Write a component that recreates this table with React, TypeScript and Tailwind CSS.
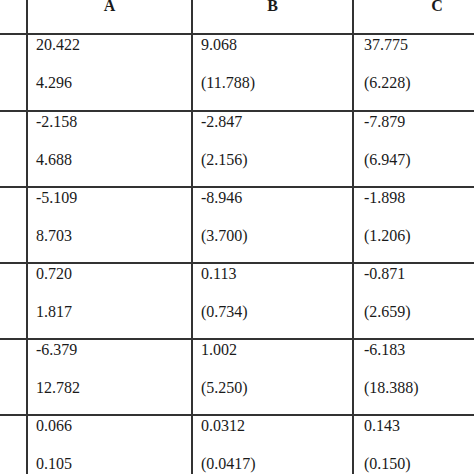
import React from 'react';

const rows = [
  { a: ['20.422', '4.296'], b: ['9.068', '(11.788)'], c: ['37.775', '(6.228)'] },
  { a: ['-2.158', '4.688'], b: ['-2.847', '(2.156)'], c: ['-7.879', '(6.947)'] },
  { a: ['-5.109', '8.703'], b: ['-8.946', '(3.700)'], c: ['-1.898', '(1.206)'] },
  { a: ['0.720', '1.817'], b: ['0.113', '(0.734)'], c: ['-0.871', '(2.659)'] },
  { a: ['-6.379', '12.782'], b: ['1.002', '(5.250)'], c: ['-6.183', '(18.388)'] },
  { a: ['0.066', '0.105'], b: ['0.0312', '(0.0417)'], c: ['0.143', '(0.150)'] },
];

const gridCols = 'grid grid-cols-[26px_165px_161px_168px]';

const Cell: React.FC<{ lines: string[]; pad: string }> = ({ lines, pad }) => (
  <div className={`border-l-2 border-t-2 border-[#333] pt-[1px] ${pad}`}>
    <div className="leading-[18px]">{lines[0]}</div>
    <div className="leading-[18px] mt-[20px]">{lines[1]}</div>
  </div>
);

export default function App() {
  return (
    <div
      className="w-[474px] h-[474px] overflow-hidden bg-white text-[16px] text-[#1a1a1a]"
      style={{ fontFamily: '"Liberation Serif", "Times New Roman", serif' }}
    >
      <div className="w-[520px]">
        {/* Header */}
        <div className={`${gridCols} h-[33px] font-bold`}>
          <div />
          <div className="border-l-2 border-[#333] text-center leading-[18px] -mt-[3px]">A</div>
          <div className="border-l-2 border-[#333] text-center leading-[18px] -mt-[3px]">B</div>
          <div className="border-l-2 border-[#333] text-center leading-[18px] -mt-[3px]">C</div>
        </div>

        {rows.map((r, i) => (
          <div key={i} className={`${gridCols} ${i === 0 ? 'h-[77px]' : 'h-[76px]'}`}>
            <div className="border-t-2 border-[#333]" />
            <Cell lines={r.a} pad="pl-[8px]" />
            <Cell lines={r.b} pad="pl-[8px]" />
            <Cell lines={r.c} pad="pl-[10px]" />
          </div>
        ))}
      </div>
    </div>
  );
}
